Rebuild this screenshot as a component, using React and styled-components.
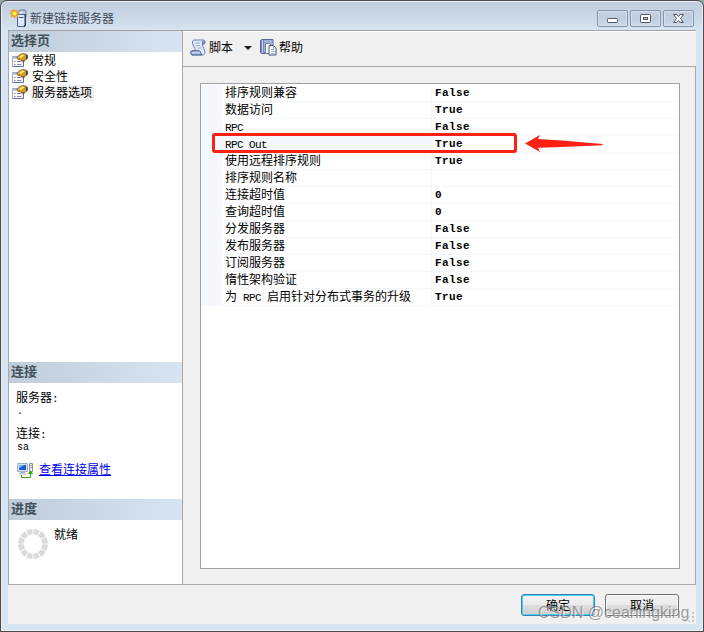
import React from "react";
import styled, { createGlobalStyle, css } from "styled-components";

const options = [
  { name: "排序规则兼容", value: "False" },
  { name: "数据访问", value: "True" },
  { name: "RPC", value: "False" },
  { name: "RPC Out", value: "True", selected: true },
  { name: "使用远程排序规则", value: "True" },
  { name: "排序规则名称", value: "" },
  { name: "连接超时值", value: "0" },
  { name: "查询超时值", value: "0" },
  { name: "分发服务器", value: "False" },
  { name: "发布服务器", value: "False" },
  { name: "订阅服务器", value: "False" },
  { name: "惰性架构验证", value: "False" },
  { name: "为 RPC 启用针对分布式事务的升级", value: "True" },
];

const pages = ["常规", "安全性", "服务器选项"];

// CJK glyphs are 12px wide, latin runs are squeezed to 6px per character
const Label = ({ children }) =>
  children
    .split(/([\x20-\x7e]+)/)
    .filter(Boolean)
    .map((part, i) =>
      /[\x20-\x7e]/.test(part) ? <Latin key={i}>{part}</Latin> : part
    );

const ServerIcon = () => (
  <svg width="17" height="18" viewBox="0 0 17 18">
    <path d="M8 2.500l2-1.500h5l1 1.500v5l-1 1h-5l-2-1z" fill="#b5c6dd" stroke="#6a7d9c" />
    <path d="M10 3.500h2.500M11 5.500h3" stroke="#fff" />
    <path d="M7.500 6.500l1-1h5.500l1.500 1v9.500l-1 1.500h-7z" fill="#dfe9f6" stroke="#4e678f" />
    <path d="M15.200 5v11l-1.200 1.500" fill="none" stroke="#2c4265" strokeWidth="1.400" />
    <path d="M9 8.500h4.500" stroke="#3d5680" />
    <path d="M9 10.500h4.500" stroke="#fff" />
    <path
      d="M4 0l1 2 2-1-.5 2.200L9 4 7 5.200 8 7.500 5.600 7 4.500 9.500 3.300 7 1 8l.8-2.500L0 4.500l2-1L1 1l2.200 1z"
      fill="#f0960a"
      stroke="#f2a01c"
      strokeWidth=".6"
    />
    <circle cx="4.500" cy="4.600" r="2.100" fill="#ffee55" />
  </svg>
);

const PageIcon = () => (
  <svg width="16" height="15" viewBox="0 0 16 15">
    <path d="M.5 3.500h11v10H.5z" fill="#fff" stroke="#a4adc2" />
    <path d="M1 4h6v1.500H1z" fill="#9fb2e0" />
    <path d="M11.500 6v7.500H.5" fill="none" stroke="#66728f" />
    <path d="M2 8.500h1.500M2 11.500h1.500M5 8.500h4.500M5 11.500h4.500" stroke="#8a82d4" />
    <path
      d="M5 4L8 1.500 10.500.5l3 .3 1.800 1.700v3l-2.300 2-2.500.5L9 6.800 7 7 5.500 6z"
      fill="#cf9c25"
      stroke="#86661c"
      strokeWidth=".8"
    />
    <path d="M6.500 4l4-2.500 2 .8L9 5z" fill="#ffe38a" />
    <path d="M13.800 1.500L15.800 2v3.500L14 6.500z" fill="#4a4c3c" />
    <path d="M9.500 7.500l2 .8 1.500-.8" fill="none" stroke="#5a4a22" />
  </svg>
);

const ScriptIcon = () => (
  <svg width="17" height="17" viewBox="0 0 17 17">
    <path
      d="M4 1h9.500c2 .2 2.500 3 .5 4h-1.500c0 3 2 5 2.500 8 0 2-1 3-2.500 3H2C.4 15.500.3 12 2 11.500h3.500C5 9 3 7 2.500 4 2.300 2.500 2.700 1.400 4 1z"
      fill="#dfe9f8"
      stroke="#6c82ad"
    />
    <path d="M2 11.800h7.500c1 .6 1 2.500 2.500 4H2C.6 15 .6 12.500 2 11.800z" fill="#bccbe6" stroke="#405a8b" />
    <path d="M12.500 5V2.500c.5-1 2.500-.5 2 1.500-.3.700-1 1-2 1z" fill="#8da2cc" stroke="#526b9b" strokeWidth=".8" />
    <path d="M5 4h5M5.500 6.500h5M7 9h5" stroke="#9db2da" />
  </svg>
);

const HelpIcon = () => (
  <svg width="17" height="17" viewBox="0 0 17 17">
    <path d="M.5 1.500L2 .5h11v14H1.500l-1-1z" fill="#7783bd" stroke="#59659e" />
    <path d="M4 1h8.500v12H4z" fill="#a4aedb" />
    <path d="M2.500 1v13" stroke="#cfd5ef" />
    <path d="M5.500 4.500h4l2 2v8h-6z" fill="#fff" stroke="#6f7fa6" />
    <path d="M9 6.500h4.500L16 9v7H9z" fill="#fff" stroke="#405272" />
    <path d="M13.500 6.500V9H16M11 10.500h3M11 12.500h3.500M11 14.500h3.500" fill="none" stroke="#98a7c5" />
  </svg>
);

const ConnectionIcon = () => (
  <svg width="17" height="17" viewBox="0 0 17 17">
    <path d="M.5 1.500h10v8H.5z" fill="#d9e2ef" stroke="#a3b1c8" />
    <path d="M2 3h7v5H2z" fill="#1c5ed2" />
    <path d="M2 3h5L2 6.500z" fill="#70b5fa" />
    <path d="M3 10.500h5M1.500 12h8" stroke="#a3adbd" />
    <path d="M12.500 1.500h3v8h-3z" fill="#f2f2f2" stroke="#8c929c" />
    <path d="M13 3.500h2M13 5.500h2" stroke="#9ba2ae" />
    <path d="M4.500 13v2.500h9V11" fill="none" stroke="#35a012" />
    <path d="M10.800 12l2.700-3.500 2.700 3.500z" fill="#35a012" />
  </svg>
);

const Spinner = () => (
  <svg width="30" height="30" viewBox="0 0 30 30">
    <circle
      cx="15"
      cy="15"
      r="12.200"
      fill="none"
      stroke="#d9d9d9"
      strokeWidth="5.400"
      pathLength="120"
      strokeDasharray="8.500 1.500"
      strokeDashoffset="-.75"
    />
  </svg>
);

const MinimizeIcon = () => (
  <svg width="13" height="13" viewBox="0 0 13 13">
    <rect x="1.500" y="6.500" width="10" height="4" rx=".8" fill="#fff" stroke="#535666" />
  </svg>
);

const MaximizeIcon = () => (
  <svg width="13" height="13" viewBox="0 0 13 13">
    <rect x="1.500" y="2.500" width="10" height="8" rx=".8" fill="#fff" stroke="#535666" />
    <rect x="4.500" y="5.500" width="4" height="2" fill="#b9c9dd" stroke="#535666" />
  </svg>
);

const CloseIcon = () => (
  <svg width="13" height="13" viewBox="0 0 13 13">
    <path
      d="M1.500 2.500h3.300l1.700 2 1.700-2h3.300L8.500 6.500l3 4H8.200l-1.700-2-1.700 2H1.500l3-4z"
      fill="#fff"
      stroke="#535666"
      strokeLinejoin="round"
    />
  </svg>
);

const App = () => {
  return (
    <Window>
      <GlobalStyle />
      <TitleBar>
        <ServerIcon />
        <Title>新建链接服务器</Title>
        <WindowButtons>
          <WindowButton><MinimizeIcon /></WindowButton>
          <WindowButton><MaximizeIcon /></WindowButton>
          <WindowButton><CloseIcon /></WindowButton>
        </WindowButtons>
      </TitleBar>

      <Client>
        <Body>
          <Sidebar>
            <SectionHeader>选择页</SectionHeader>
            <PageList>
              {pages.map((page) => (
                <PageItem key={page}>
                  <PageIcon />
                  <PageName $active={page === "服务器选项"}>{page}</PageName>
                </PageItem>
              ))}
            </PageList>

            <SectionHeader>连接</SectionHeader>
            <Connection>
              <Field>
                <div>服务器<Latin>:</Latin></div>
                <FieldValue>.</FieldValue>
              </Field>
              <Field>
                <div>连接<Latin>:</Latin></div>
                <FieldValue>sa</FieldValue>
              </Field>
              <LinkRow>
                <ConnectionIcon />
                <Link href="#">查看连接属性</Link>
              </LinkRow>
            </Connection>

            <SectionHeader>进度</SectionHeader>
            <Progress>
              <Spinner />
              <span>就绪</span>
            </Progress>
          </Sidebar>

          <Main>
            <Toolbar>
              <ScriptIcon />
              <ToolLabel>脚本</ToolLabel>
              <Caret />
              <HelpIcon />
              <ToolLabel>帮助</ToolLabel>
            </Toolbar>
            <Content>
              <Grid>
                {options.map((option) => (
                  <Row key={option.name}>
                    <Name $selected={option.selected}>
                      <Label>{option.name}</Label>
                    </Name>
                    <Value>{option.value}</Value>
                    {option.selected && (
                      <>
                        <Highlight />
                        <Arrow width="78" height="18" viewBox="0 0 78 18">
                          <path d="M0 8.500L15 0l-2 4 24 1.500L77.500 9v1.200L37 12l-24 .8L15 17z" fill="#fe2012" />
                        </Arrow>
                      </>
                    )}
                  </Row>
                ))}
              </Grid>
            </Content>
          </Main>
        </Body>

        <Footer>
          <Button $primary>确定</Button>
          <Button>取消</Button>
        </Footer>
      </Client>

      <SizeGrip width="12" height="12" viewBox="0 0 12 12">
        <path
          d="M9 1h2v2H9zM5 5h2v2H5zM9 5h2v2H9zM1 9h2v2H1zM5 9h2v2H5zM9 9h2v2H9z"
          fill="#c4c4c4"
        />
      </SizeGrip>
      <Watermark>CSDN @ceaningking</Watermark>
    </Window>
  );
};

const GlobalStyle = createGlobalStyle`
  * {
    box-sizing: border-box;
  }

  body {
    margin: 0;
    background: #8fa6a8;
    overflow: hidden;
  }

  svg {
    display: block;
    flex-shrink: 0;
  }
`;

const Window = styled.div`
  position: relative;
  display: flex;
  flex-direction: column;
  width: 704px;
  height: 632px;
  padding: 0 7px 7px;
  border: 1px solid #4a484c;
  border-radius: 7px 7px 0 0;
  background: linear-gradient(#bdcbdb 0, #d7e4f1 30px);
  box-shadow: inset 0 0 0 1px #e9f1f9;
  color: #000;
  font-family: "Liberation Sans", "Noto Sans CJK SC", sans-serif;
  font-size: 12px;
  line-height: 16px;
`;

const Latin = styled.span`
  font-family: "Liberation Mono", monospace;
  font-size: 11px;
  line-height: 1;
  letter-spacing: -0.6px;
  white-space: pre;
`;

const TitleBar = styled.div`
  display: flex;
  align-items: flex-start;
  height: 29px;
  padding: 8px 2px 0 2px;
`;

const Title = styled.span`
  margin: 2px auto 0 3px;
  color: #3f4b59;
`;

const WindowButtons = styled.div`
  display: flex;
  gap: 2px;
  padding-top: 1px;
`;

const WindowButton = styled.div`
  display: flex;
  justify-content: center;
  align-items: center;
  width: 31px;
  height: 17px;
  border: 1px solid #8593ae;
  border-radius: 2px;
  background: linear-gradient(#c3d0e0, #bfcddd 50%, #cbd9e8);
  box-shadow: inset 0 0 0 1px #d5e0ec;
`;

const Client = styled.div`
  flex: 1;
  display: flex;
  flex-direction: column;
  background: #f0f0f0;
`;

const Body = styled.div`
  display: flex;
  height: 555px;
  border-top: 1px solid #a0a0a5;
  border-bottom: 1px solid #a7a7ac;
`;

const Sidebar = styled.div`
  display: flex;
  flex-direction: column;
  width: 175px;
  border: solid #a7a7ac;
  border-width: 0 1px;
  background: #fff;
`;

const SectionHeader = styled.div`
  height: 21px;
  padding-left: 2px;
  background: linear-gradient(90deg, #bfccda, #d7e4f2);
  color: #415059;
  font-size: 13px;
  font-weight: bold;
  line-height: 19px;
`;

const PageList = styled.div`
  height: 310px;
  padding: 1px 3px;
`;

const PageItem = styled.div`
  display: flex;
  align-items: flex-start;
  gap: 3px;
  height: 16px;
`;

const PageName = styled.span`
  height: 16px;
  padding: 0 2px 0 1px;
  line-height: 17px;
  ${({ $active }) => $active && css`
    background: #f0f0f0;
  `}
`;

const Connection = styled.div`
  height: 116px;
  padding: 7px 8px 0 7px;
`;

const Field = styled.div`
  height: 36px;
`;

const FieldValue = styled.div`
  padding-left: 1px;
  font-family: "Liberation Mono", monospace;
  font-size: 10px;
  line-height: 12px;
`;

const LinkRow = styled.div`
  display: flex;
  gap: 5px;
  padding-left: 1px;
`;

const Link = styled.a`
  color: #0000f0;
  text-decoration: underline;
  text-underline-offset: 1px;
`;

const Progress = styled.div`
  display: flex;
  gap: 6px;
  padding: 7px 9px;

  svg {
    margin-top: 2px;
  }
`;

const Main = styled.div`
  flex: 1;
  display: flex;
  flex-direction: column;
`;

const Toolbar = styled.div`
  display: flex;
  align-items: center;
  height: 36px;
  padding: 0 7px 3px;
  border-top: 1px solid #fff;
  border-bottom: 1px solid #a7a7ac;
`;

const ToolLabel = styled.span`
  margin-left: 2px;
`;

const Caret = styled.span`
  margin: 0 8px 0 11px;
  border: 4px solid transparent;
  border-top-color: #1c1c1c;
  border-bottom: 0;
`;

const Content = styled.div`
  flex: 1;
  padding: 16px 15px 15px 17px;
  border-right: 1px solid #a7a7ac;
`;

const Grid = styled.div`
  width: 480px;
  height: 486px;
  padding-top: 1px;
  border: 1px solid #a0a0a5;
  background: #fff;
`;

const Row = styled.div`
  position: relative;
  display: grid;
  grid-template-columns: 210px 1fr;
  height: 17px;
  border-left: 21px solid #f4f7fc;
  border-bottom: 1px solid #f4f7fc;
  line-height: 17px;
`;

const Name = styled.div`
  height: 16px;
  padding-left: 3px;
  border-right: 1px solid #f4f7fc;
  background: ${({ $selected }) => ($selected ? "#f4f7fc" : "#fff")};
  white-space: nowrap;
`;

const Value = styled.div`
  height: 16px;
  padding-left: 3px;
  font-family: "Liberation Mono", monospace;
  font-size: 11px;
  font-weight: bold;
  letter-spacing: 0.4px;
  line-height: 16px;
`;

const Highlight = styled.div`
  position: absolute;
  top: -3px;
  left: -10px;
  width: 305px;
  height: 20px;
  border: 3px solid #fe2012;
  border-radius: 3px;
`;

const Arrow = styled.svg`
  position: absolute;
  top: -1px;
  left: 303px;
`;

const Footer = styled.div`
  flex: 1;
  display: flex;
  justify-content: flex-end;
  gap: 10px;
  padding: 9px 17px 0 0;
`;

const Button = styled.button`
  width: 74px;
  height: 22px;
  padding: 1px 0 0;
  border: 1px solid ${({ $primary }) => ($primary ? "#3c7fb1" : "#707070")};
  border-radius: 3px;
  background: linear-gradient(#f2f2f2, #ebebeb 50%, #dddddd 50%, #cfcfcf);
  box-shadow: inset 0 0 0 1px ${({ $primary }) => ($primary ? "#45d0f5" : "#fbfbfb")};
  color: #000;
  font: inherit;
`;

const SizeGrip = styled.svg`
  position: absolute;
  right: 8px;
  bottom: 8px;
`;

const Watermark = styled.div`
  position: absolute;
  left: 537px;
  top: 602px;
  color: rgba(125, 125, 130, 0.75);
  font-size: 16px;
  line-height: 20px;
  text-shadow: 1px 1px 0 rgba(255, 255, 255, 0.6);
  white-space: nowrap;
`;

export default App;
